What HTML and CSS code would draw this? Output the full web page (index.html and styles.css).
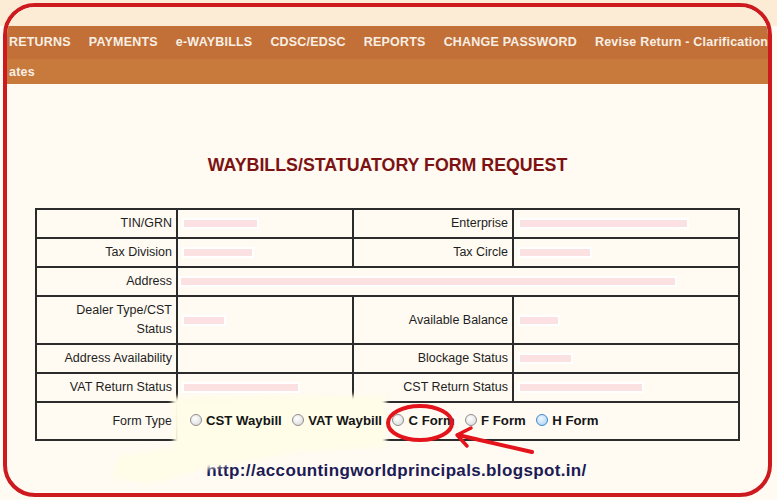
FILE: index.html
```html
<!DOCTYPE html>
<html lang="en">
<head>
  <meta charset="UTF-8" />
  <meta name="viewport" content="width=device-width, initial-scale=1.0"/>
  <title>Waybills/Statutory Form Request</title>
  <link rel="stylesheet" href="styles.css">
</head>
<body>

  <div class="frame">
    <div class="topstrip"></div>

    <nav class="menu">
      <a href="#">RETURNS</a>
      <a href="#">PAYMENTS</a>
      <a href="#">e-WAYBILLS</a>
      <a href="#">CDSC/EDSC</a>
      <a href="#">REPORTS</a>
      <a href="#">CHANGE PASSWORD</a>
      <a href="#">Revise Return - Clarifications</a>
    </nav>
    <div class="submenu"><a href="#">ates</a></div>

    <main class="content">
      <h1>WAYBILLS/STATUATORY FORM REQUEST</h1>

      <table class="dealer">
        <colgroup>
          <col class="c1"><col class="c2"><col class="c3"><col class="c4">
        </colgroup>
        <tr>
          <td class="lbl">TIN/GRN</td>
          <td><span class="mask" style="width:73px"></span></td>
          <td class="lbl">Enterprise</td>
          <td><span class="mask" style="width:167px"></span></td>
        </tr>
        <tr>
          <td class="lbl">Tax Division</td>
          <td><span class="mask" style="width:68px"></span></td>
          <td class="lbl">Tax Circle</td>
          <td><span class="mask" style="width:70px"></span></td>
        </tr>
        <tr>
          <td class="lbl">Address</td>
          <td colspan="3"><span class="mask wide" style="width:494px"></span></td>
        </tr>
        <tr>
          <td class="lbl">Dealer Type/CST Status</td>
          <td><span class="mask" style="width:40px"></span></td>
          <td class="lbl">Available Balance</td>
          <td><span class="mask" style="width:38px"></span></td>
        </tr>
        <tr>
          <td class="lbl">Address Availability</td>
          <td></td>
          <td class="lbl">Blockage Status</td>
          <td><span class="mask" style="width:51px"></span></td>
        </tr>
        <tr>
          <td class="lbl">VAT Return Status</td>
          <td><span class="mask" style="width:114px"></span></td>
          <td class="lbl">CST Return Status</td>
          <td><span class="mask" style="width:122px"></span></td>
        </tr>
        <tr class="form-row">
          <td class="lbl">Form Type</td>
          <td colspan="3">
            <div class="choices">
              <label><input type="radio" name="formType">CST Waybill</label>
              <label><input type="radio" name="formType">VAT Waybill</label>
              <label><input type="radio" name="formType">C Form</label>
              <label><input type="radio" name="formType">F Form</label>
              <label><input type="radio" name="formType" class="hover">H Form</label>
            </div>
          </td>
        </tr>
      </table>

      <p class="link">http://accountingworldprincipals.blogspot.in/</p>
    </main>

    <!-- pale patch left over from editing the screenshot -->
    <svg class="patch" viewBox="7 7 761 486" width="761" height="486">
      <defs>
        <filter id="soft"><feGaussianBlur stdDeviation="2"/></filter>
      </defs>
      <path d="M172 397 L386 395 L386 447 L300 452 L210 468 L150 484 L112 478 L118 456 L174 447 Z"
            fill="#fffde8" filter="url(#soft)"/>
    </svg>

    <!-- red marker round the C Form choice -->
    <svg class="annot" viewBox="7 7 761 486" width="761" height="486">
      <ellipse cx="420" cy="423" rx="32" ry="17" fill="none" stroke="#e3141b" stroke-width="4"/>
      <line x1="532" y1="452" x2="458" y2="435" stroke="#e3141b" stroke-width="4" stroke-linecap="round"/>
      <path d="M471 428 L457 435 L467 446" fill="none" stroke="#e3141b" stroke-width="3.5" stroke-linecap="round" stroke-linejoin="round"/>
    </svg>
  </div>

</body>
</html>
```

FILE: styles.css
```css
body {
  font-family: "Liberation Sans", Arial, sans-serif;
  margin: 0;
  background: linear-gradient(#fcebd5 26px, #fffaf2 26px);
  color: #1e1e1e;
}

.frame {
  position: relative;
  height: 486px;
  margin: 3px 5px 3px 3px;
  border: 4px solid #cc1a1f;
  border-radius: 32px;
  background: #fffaf2;
  overflow: hidden;
}

.topstrip {
  height: 19px;
  background: #fcebd5;
}

.menu {
  display: flex;
  align-items: center;
  gap: 18px;
  height: 33px;
  padding-left: 2px;
  background: #c26f38;
  white-space: nowrap;
  overflow: hidden;
}

.menu a, .submenu a {
  flex-shrink: 0;
  color: #f8efe4;
  text-decoration: none;
  font-weight: bold;
  font-size: 12.5px;
  letter-spacing: 0.2px;
}

.menu a {
  margin-top: -2px;
}

.submenu {
  display: flex;
  align-items: center;
  height: 25px;
  padding-left: 2px;
  background: #c77a3b;
}

.content h1 {
  margin: 71px 0 0;
  text-align: center;
  font-size: 17.8px;
  line-height: 21px;
  color: #7d1212;
}

.dealer {
  width: 703px;
  margin: 32px auto 0;
  border-collapse: collapse;
  table-layout: fixed;
  font-size: 12.5px;
}

.dealer .c1 { width: 141px; }
.dealer .c2 { width: 176px; }
.dealer .c3 { width: 160px; }
.dealer .c4 { width: 226px; }

.dealer td {
  border: 2px solid #2b2b2b;
  padding: 4px 5px 4px 6px;
  line-height: 19px;
}

.dealer td.lbl {
  text-align: right;
  padding-right: 4px;
}

.mask {
  display: inline-block;
  height: 7px;
  vertical-align: middle;
  background: #fbe1e1;
  box-shadow: 0 0 0 2px #fff;
}

.mask.wide {
  margin-left: -3px;
}

.form-row td {
  padding-top: 8px;
  padding-bottom: 8px;
}

.choices {
  position: relative;
  z-index: 1;
  padding-left: 6px;
  white-space: nowrap;
}

.choices label {
  margin-right: 7px;
  font-weight: bold;
  font-size: 13.2px;
  color: #151515;
}

.choices input {
  appearance: none;
  width: 12px;
  height: 12px;
  margin: 0 4px 0 0;
  vertical-align: -1px;
  border: 1px solid #8f8f8f;
  border-radius: 50%;
  background: radial-gradient(circle at 40% 35%, #fff, #d6d6d6);
}

.choices input.hover {
  border-color: #3d8ad3;
  background: radial-gradient(circle at 40% 35%, #eef7ff, #a6d0f0);
}

.link {
  margin: 20px 0 0;
  padding-left: 18px;
  text-align: center;
  font-weight: bold;
  font-size: 17px;
  line-height: 20px;
  letter-spacing: 0.35px;
  color: #1b1b55;
}

.patch, .annot {
  position: absolute;
  left: 0;
  top: 0;
}

.annot {
  z-index: 2;
}
```
